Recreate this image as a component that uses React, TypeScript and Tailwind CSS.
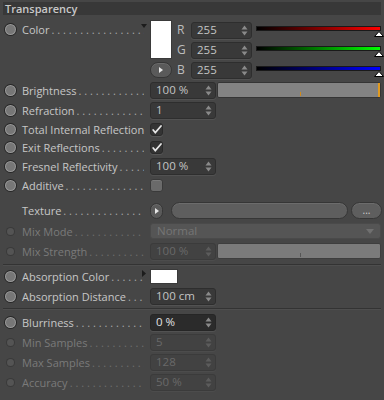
import React from "react";

const F = "font-['Open_Sans',sans-serif]";

function Radio({ kind }: { kind: "on" | "dim" | "none" }) {
  if (kind === "none") return <div className="w-[13px] h-[13px] shrink-0" />;
  if (kind === "on")
    return (
      <div className="w-[13px] h-[13px] shrink-0 rounded-full bg-[#262626] p-[1px]">
        <div className="w-full h-full rounded-full bg-[#9a9a9a] p-[1px]">
          <div className="w-full h-full rounded-full bg-[#777777]" />
        </div>
      </div>
    );
  return (
    <div className="w-[13px] h-[13px] shrink-0 flex items-center justify-center">
      <div className="w-[9px] h-[9px] rounded-full bg-[#3a3a3a] p-[1px]">
        <div className="w-full h-full rounded-full bg-[#545454]" />
      </div>
    </div>
  );
}

function Label({
  radio,
  text,
  dim,
}: {
  radio: "on" | "dim" | "none";
  text: string;
  dim?: boolean;
}) {
  return (
    <div className="w-[150px] shrink-0 flex items-center pl-[4px] pr-[6px]">
      <Radio kind={radio} />
      <span
        className={`ml-[5px] whitespace-nowrap text-[11px] leading-none ${
          dim ? "text-[#7a7a7a]" : "text-[#c6c6c6]"
        }`}
      >
        {text}
      </span>
      <span
        className={`flex-1 overflow-hidden whitespace-nowrap text-[11px] leading-none ml-[2px] ${
          dim ? "text-[#6e6e6e]" : "text-[#a8a8a8]"
        }`}
      >
        {" .".repeat(40)}
      </span>
    </div>
  );
}

function Spin({ dim }: { dim?: boolean }) {
  const c = dim ? "#5c5c5c" : "#8a8a8a";
  return (
    <svg width="7" height="11" viewBox="0 0 7 11" className="shrink-0">
      <path d="M3.5 0.5 L6.5 4.5 L0.5 4.5 Z" fill={c} />
      <path d="M3.5 10.5 L6.5 6.5 L0.5 6.5 Z" fill={c} />
    </svg>
  );
}

function Input({
  value,
  w = "w-[66px]",
  variant = "normal",
}: {
  value: string;
  w?: string;
  variant?: "normal" | "dark" | "dim";
}) {
  const cls =
    variant === "normal"
      ? "bg-[#393939] border-[#2e2e2e] text-[#c4c4c4] shadow-[0_1px_0_#525252]"
      : variant === "dark"
      ? "bg-[#2b2b2b] border-[#262626] text-[#e2e2e2] shadow-[0_1px_0_#525252]"
      : "bg-[#424242] border-[#3b3b3b] text-[#696969] shadow-[0_1px_0_#4c4c4c]";
  return (
    <div
      className={`${w} h-[17px] shrink-0 rounded-[3px] border ${cls} flex items-center justify-between pl-[5px] pr-[3px]`}
    >
      <span className="text-[11.5px] leading-none">{value}</span>
      <Spin dim={variant === "dim"} />
    </div>
  );
}

function ColorBar({ to }: { to: string }) {
  return (
    <div className="relative flex-1 h-[20px] mr-[3px]">
      <div
        className="absolute left-0 right-0 top-[6px] h-[5px] border border-[#1a1a1a]"
        style={{ background: `linear-gradient(to right, #000000, ${to})` }}
      />
      <svg
        width="10"
        height="6"
        viewBox="0 0 10 6"
        className="absolute right-[-3px] top-[11px]"
      >
        <path d="M5 0.5 L9.5 5.5 L0.5 5.5 Z" fill="#ffffff" stroke="#000" strokeWidth="1" />
      </svg>
    </div>
  );
}

function Check({ checked }: { checked: boolean }) {
  if (!checked)
    return (
      <div className="w-[13px] h-[13px] rounded-[3px] bg-[#6a6a6a] border border-[#3a3a3a] shadow-[inset_0_1px_0_#7a7a7a]" />
    );
  return (
    <div className="w-[13px] h-[13px] rounded-[3px] bg-[#343434] border border-[#2a2a2a] shadow-[0_1px_0_#555] flex items-center justify-center">
      <svg width="10" height="9" viewBox="0 0 10 9">
        <path
          d="M1.2 5 L3.3 7.6 L9 1"
          fill="none"
          stroke="#e8e8e8"
          strokeWidth="1.7"
          strokeLinecap="round"
        />
      </svg>
    </div>
  );
}

function PlayPill({ w }: { w: string }) {
  return (
    <div
      className={`${w} h-[16px] shrink-0 rounded-full bg-[#5a5a5a] border border-[#363636] shadow-[inset_0_1px_0_#6a6a6a] flex items-center justify-center`}
    >
      <svg width="4" height="6" viewBox="0 0 4 6">
        <path d="M0 0 L4 3 L0 6 Z" fill="#e6e6e6" />
      </svg>
    </div>
  );
}

function Slider({ dim }: { dim?: boolean }) {
  return (
    <div
      className={`relative flex-1 h-[16px] ml-[1px] mr-[3px] rounded-[2px] border ${
        dim ? "bg-[#7b7b7b] border-[#3e3e3e]" : "bg-[#838383] border-[#353535]"
      }`}
    >
      <div
        className={`absolute bottom-[1px] left-[82px] w-[1px] h-[4px] ${
          dim ? "bg-[#555555]" : "bg-[#d08a1a]"
        }`}
      />
      {!dim && (
        <div className="absolute right-0 top-0 bottom-0 w-[2px] bg-[#e09a20]" />
      )}
    </div>
  );
}

function Sep() {
  return <div className="mx-[3px] h-[1px] bg-[#333333] shadow-[0_1px_0_#4e4e4e]" />;
}

export default function App() {
  return (
    <div className={`${F} w-[384px] h-[400px] bg-[#464646] flex flex-col overflow-hidden`}>
      {/* header */}
      <div className="mx-[3px] mt-[2px] h-[13px] bg-[#383838] flex items-center pl-[2px]">
        <span className="text-[11px] font-semibold text-[#c8c8c8] leading-none">
          Transparency
        </span>
      </div>

      {/* color block */}
      <div className="mt-[5px] flex h-[60px]">
        <div className="flex flex-col">
          <div className="h-[19px] flex items-center">
            <Label radio="on" text="Color" />
          </div>
        </div>
        <div className="relative w-0">
          <svg
            width="6"
            height="4"
            viewBox="0 0 6 4"
            className="absolute left-[-9px] top-[4px]"
          >
            <path d="M0 0 L6 0 L3 4 Z" fill="#1c1c1c" />
          </svg>
        </div>
        <div className="w-[22px] shrink-0 flex flex-col">
          <div className="h-[39px] bg-white border border-[#3a3a3a]" />
          <div className="mt-[3px]">
            <PlayPill w="w-[22px]" />
          </div>
        </div>
        <div className="flex-1 flex flex-col">
          {[
            ["R", "#ff0000"],
            ["G", "#00ff00"],
            ["B", "#0000ff"],
          ].map(([l, c]) => (
            <div key={l} className="h-[20px] flex items-center">
              <span className="w-[19px] pl-[5px] text-[12px] text-[#bdbdbd] leading-none">
                {l}
              </span>
              <Input value="255" w="w-[61px]" />
              <div className="w-[4px]" />
              <ColorBar to={c} />
            </div>
          ))}
        </div>
      </div>

      {/* Brightness */}
      <div className="h-[20px] flex items-center">
        <Label radio="on" text="Brightness" />
        <Input value="100 %" />
        <Slider />
      </div>
      <div className="h-[20px] flex items-center">
        <Label radio="on" text="Refraction" />
        <Input value="1" />
      </div>
      <div className="h-[18px] flex items-center">
        <Label radio="on" text="Total Internal Reflection" />
        <Check checked />
      </div>
      <div className="h-[18px] flex items-center">
        <Label radio="on" text="Exit Reflections" />
        <Check checked />
      </div>
      <div className="h-[20px] flex items-center">
        <Label radio="on" text="Fresnel Reflectivity" />
        <Input value="100 %" />
      </div>
      <div className="h-[19px] flex items-center">
        <Label radio="on" text="Additive" />
        <Check checked={false} />
      </div>

      {/* texture */}
      <div className="mt-[5px] h-[21px] flex items-center">
        <Label radio="none" text="Texture" />
        <PlayPill w="w-[13px]" />
        <div className="ml-[8px] flex-1 h-[17px] rounded-full bg-[#5e5e5e] border border-[#363636] shadow-[inset_0_1px_0_#6c6c6c]" />
        <div className="ml-[3px] mr-[2px] w-[31px] h-[17px] rounded-full bg-[#5e5e5e] border border-[#363636] shadow-[inset_0_1px_0_#6c6c6c] flex items-end justify-center pb-[3px]">
          <span className="text-[10px] leading-none text-[#d0d0d0]">...</span>
        </div>
      </div>
      <div className="h-[20px] flex items-center">
        <Label radio="dim" text="Mix Mode" dim />
        <div className="flex-1 mr-[3px] h-[16px] rounded-[3px] bg-[#555555] border border-[#4a4a4a] flex items-center justify-between pl-[6px] pr-[6px]">
          <span className="text-[11.5px] leading-none text-[#757575]">Normal</span>
          <svg width="8" height="5" viewBox="0 0 8 5">
            <path d="M0 0 L8 0 L4 5 Z" fill="#707070" />
          </svg>
        </div>
      </div>
      <div className="h-[20px] flex items-center">
        <Label radio="dim" text="Mix Strength" dim />
        <Input value="100 %" variant="dim" />
        <Slider dim />
      </div>

      <div className="h-[3px]" />
      <Sep />
      <div className="h-[1px]" />

      {/* absorption */}
      <div className="h-[20px] flex items-center">
        <Label radio="on" text="Absorption Color" />
        <div className="relative w-0">
          <svg
            width="4"
            height="7"
            viewBox="0 0 4 7"
            className="absolute left-[-8px] top-[-6px]"
          >
            <path d="M0 0 L4 3.5 L0 7 Z" fill="#1c1c1c" />
          </svg>
        </div>
        <div className="w-[28px] h-[15px] bg-white border border-[#3a3a3a]" />
      </div>
      <div className="h-[20px] flex items-center">
        <Label radio="on" text="Absorption Distance" />
        <Input value="100 cm" />
      </div>

      <div className="h-[2px]" />
      <Sep />
      <div className="h-[3px]" />

      <div className="h-[20px] flex items-center">
        <Label radio="on" text="Blurriness" />
        <Input value="0 %" variant="dark" />
      </div>
      <div className="h-[20px] flex items-center">
        <Label radio="dim" text="Min Samples" dim />
        <Input value="5" variant="dim" />
      </div>
      <div className="h-[20px] flex items-center">
        <Label radio="dim" text="Max Samples" dim />
        <Input value="128" variant="dim" />
      </div>
      <div className="h-[20px] flex items-center">
        <Label radio="dim" text="Accuracy" dim />
        <Input value="50 %" variant="dim" />
      </div>
    </div>
  );
}
